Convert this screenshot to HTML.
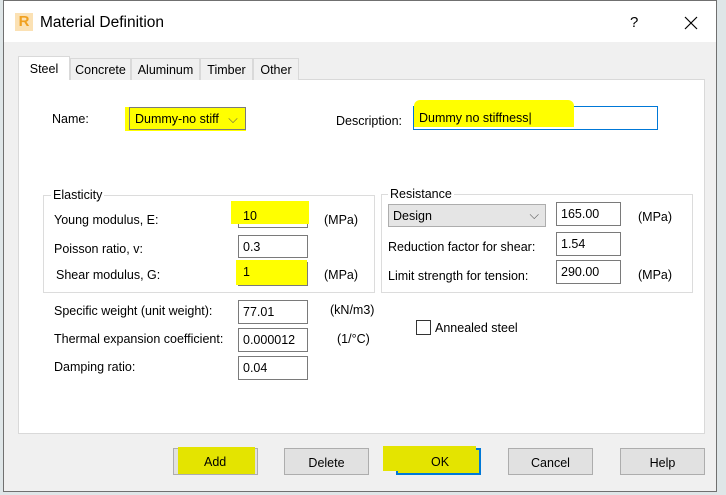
<!DOCTYPE html>
<html><head><style>
body{margin:0;width:726px;height:495px;background:#dfe6e8;position:relative;overflow:hidden;font-family:"Liberation Sans",sans-serif;font-size:12px;color:#000}
.a{position:absolute}
.win{left:3px;top:0;width:714px;height:492px;background:#f0f0f0;border:1px solid #707070;box-sizing:border-box}
.title{left:4px;top:1px;width:712px;height:41px;background:#fff}
.panel{left:18px;top:79px;width:687px;height:355px;background:#fff;border:1px solid #d9d9d9;box-sizing:border-box}
.tab{background:#f0f0f0;border:1px solid #d9d9d9;border-bottom:none;box-sizing:border-box;height:22px;top:58px;padding-top:4px;text-align:center;font-size:12.5px}
.inp{background:#fff;border:1px solid #7a7a7a;box-sizing:border-box;padding:4px 0 0 4px;font-size:12.5px}
.grp{border:1px solid #dcdcdc;box-sizing:border-box}
.btn{background:#e1e1e1;border:1px solid #adadad;box-sizing:border-box;text-align:center;padding-top:7px;width:85px;height:27px;top:448px;font-size:12.5px}
.hl{background:#ffff00}
.lbl{font-size:12.5px}
</style></head><body>
<div class="a win"></div>
<div class="a title"></div>
<div class="a" style="left:15px;top:13px;width:18px;height:18px;background:#fbe1b4;color:#f0a020;font-weight:bold;font-size:15px;text-align:center;line-height:18px">R</div>
<div class="a" style="left:40px;top:14px;font-size:15.5px">Material Definition</div>
<div class="a" style="left:630px;top:14px;font-size:15px">?</div>
<svg class="a" style="left:684px;top:16px" width="14" height="14"><path d="M1 1L13 13M13 1L1 13" stroke="#000" stroke-width="1.2"/></svg>
<div class="a panel"></div>
<div class="a tab" style="left:18px;top:56px;width:52px;height:24px;background:#fff;padding-top:5px">Steel</div>
<div class="a tab" style="left:70px;width:61px">Concrete</div>
<div class="a tab" style="left:131px;width:69px">Aluminum</div>
<div class="a tab" style="left:200px;width:53px">Timber</div>
<div class="a tab" style="left:253px;width:46px">Other</div>

<div class="a lbl" style="left:52px;top:112px">Name:</div>
<div class="a hl" style="left:125px;top:107px;width:121px;height:24px"></div>
<div class="a" style="left:129px;top:107px;width:117px;height:23px;border:1px solid #7a7a7a;box-sizing:border-box;padding:4px 0 0 5px;font-size:12.5px">Dummy-no stiff <span style="margin-left:6px;color:#555">⌵</span></div>
<div class="a lbl" style="left:336px;top:114px">Description:</div>
<div class="a" style="left:413px;top:106px;width:245px;height:24px;border:1px solid #0078d7;box-sizing:border-box;background:#fff"></div>
<div class="a hl" style="left:414px;top:100px;width:160px;height:27px;border-radius:6px 6px 0 0"></div>
<div class="a lbl" style="left:419px;top:111px">Dummy no stiffness|</div>

<div class="a grp" style="left:43px;top:195px;width:332px;height:98px"></div>
<div class="a lbl" style="left:51px;top:188px;background:#fff;padding:0 2px">Elasticity</div>
<div class="a lbl" style="left:54px;top:213px">Young modulus, E:</div>
<div class="a lbl" style="left:54px;top:242px">Poisson ratio, v:</div>
<div class="a lbl" style="left:56px;top:268px">Shear modulus, G:</div>
<div class="a inp" style="left:238px;top:204px;width:70px;height:24px"></div>
<div class="a hl" style="left:231px;top:201px;width:78px;height:23px"></div>
<div class="a lbl" style="left:243px;top:209px">10</div>
<div class="a inp" style="left:238px;top:235px;width:70px;height:23px">0.3</div>
<div class="a inp" style="left:238px;top:262px;width:70px;height:24px"></div>
<div class="a hl" style="left:236px;top:260px;width:71px;height:25px"></div>
<div class="a lbl" style="left:243px;top:265px">1</div>
<div class="a lbl" style="left:324px;top:213px">(MPa)</div>
<div class="a lbl" style="left:324px;top:268px">(MPa)</div>

<div class="a lbl" style="left:54px;top:304px">Specific weight (unit weight):</div>
<div class="a lbl" style="left:54px;top:332px">Thermal expansion coefficient:</div>
<div class="a lbl" style="left:54px;top:360px">Damping ratio:</div>
<div class="a inp" style="left:238px;top:300px;width:70px;height:24px">77.01</div>
<div class="a inp" style="left:238px;top:328px;width:70px;height:24px">0.000012</div>
<div class="a inp" style="left:238px;top:356px;width:70px;height:24px">0.04</div>
<div class="a lbl" style="left:330px;top:303px">(kN/m3)</div>
<div class="a lbl" style="left:337px;top:332px">(1/°C)</div>

<div class="a grp" style="left:381px;top:194px;width:312px;height:99px"></div>
<div class="a lbl" style="left:388px;top:187px;background:#fff;padding:0 2px">Resistance</div>
<div class="a" style="left:388px;top:204px;width:158px;height:23px;background:#e5e5e5;border:1px solid #adadad;box-sizing:border-box;padding:4px 0 0 4px;font-size:12.5px">Design<span class="a" style="right:6px;top:3px;color:#555">⌵</span></div>
<div class="a lbl" style="left:388px;top:240px">Reduction factor for shear:</div>
<div class="a lbl" style="left:388px;top:269px">Limit strength for tension:</div>
<div class="a inp" style="left:556px;top:202px;width:65px;height:24px">165.00</div>
<div class="a inp" style="left:556px;top:232px;width:65px;height:24px">1.54</div>
<div class="a inp" style="left:556px;top:260px;width:65px;height:24px">290.00</div>
<div class="a lbl" style="left:638px;top:210px">(MPa)</div>
<div class="a lbl" style="left:638px;top:268px">(MPa)</div>
<div class="a" style="left:416px;top:320px;width:15px;height:15px;border:1px solid #333;box-sizing:border-box;background:#fff"></div>
<div class="a lbl" style="left:435px;top:321px">Annealed steel</div>

<div class="a btn" style="left:173px"></div>
<div class="a hl" style="left:178px;top:447px;width:77px;height:27px;background:#e4e400"></div>
<div class="a lbl" style="left:204px;top:455px">Add</div>
<div class="a btn" style="left:284px">Delete</div>
<div class="a" style="left:396px;top:448px;width:85px;height:27px;border:2px solid #0078d7;box-sizing:border-box;background:#e4e400"></div>
<div class="a hl" style="left:383px;top:446px;width:93px;height:25px;background:#e4e400"></div>
<div class="a lbl" style="left:431px;top:455px">OK</div>
<div class="a btn" style="left:508px">Cancel</div>
<div class="a btn" style="left:620px">Help</div>
</body></html>
